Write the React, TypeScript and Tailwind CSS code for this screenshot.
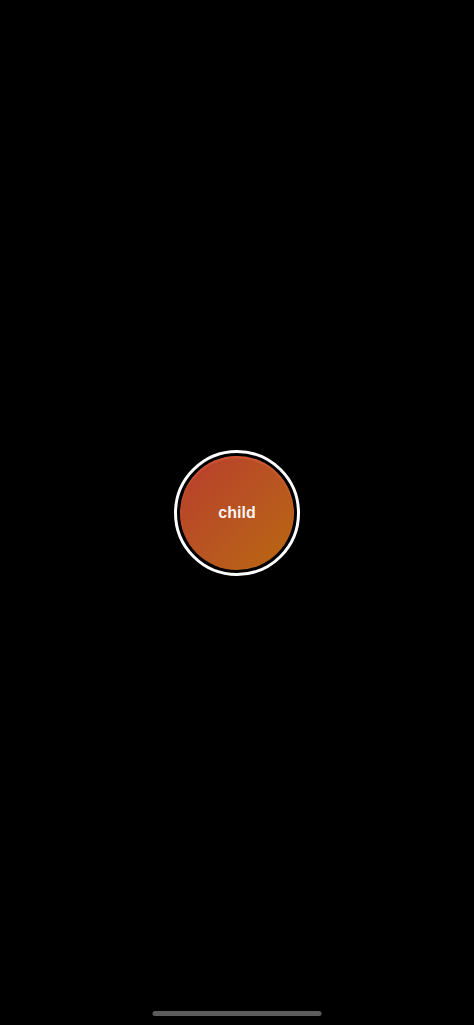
export default function App() {
  return (
    <div className="relative flex h-[1025px] w-full items-center justify-center bg-black font-['Liberation_Sans',Arial,sans-serif]">
      <div className="flex h-[126px] w-[126px] items-center justify-center rounded-full border-[3px] border-white">
        <div className="flex h-[114px] w-[114px] items-center justify-center rounded-full bg-gradient-to-br from-[#b83c2c] to-[#b8680c] shadow-[inset_0_2px_2px_rgba(255,120,80,0.35)]">
          <span className="text-[16px] font-bold text-white/95">child</span>
        </div>
      </div>
      <div className="absolute bottom-[9px] left-1/2 h-[5px] w-[169px] -translate-x-1/2 rounded-full bg-[#5c5c5c]" />
    </div>
  );
}
